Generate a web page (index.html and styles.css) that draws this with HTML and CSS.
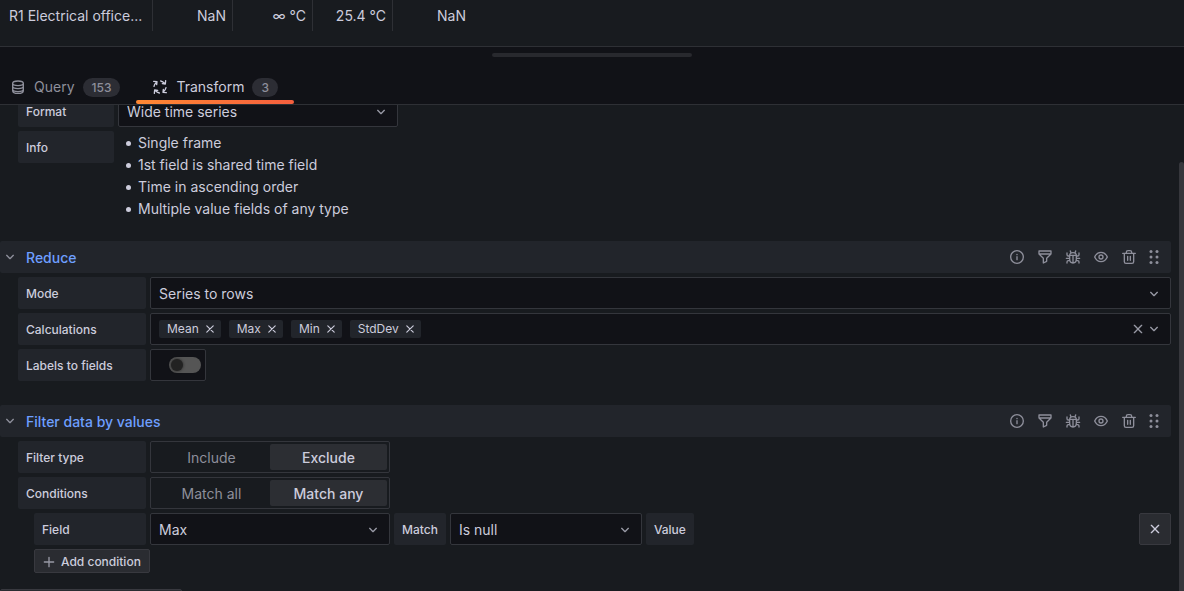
FILE: index.html
```html
<!DOCTYPE html>
<html lang="en">
<head>
    <meta charset="UTF-8">
    <meta name="viewport" content="width=device-width, initial-scale=1.0">
    <title>Edit panel</title>
    <link rel="stylesheet" href="styles.css">
</head>
<body>
    <!-- shared icons -->
    <svg class="sprite" aria-hidden="true">
        <symbol id="chevron" viewBox="0 0 24 24"><path d="M7 9.5l5 5 5-5"/></symbol>
        <symbol id="times" viewBox="0 0 24 24"><path d="M6.500 6.500l11 11M17.500 6.500l-11 11"/></symbol>
        <symbol id="plus" viewBox="0 0 24 24"><path d="M12 5v14M5 12h14"/></symbol>
        <symbol id="database" viewBox="0 0 24 24">
            <path d="M4 6.500C4 4 7.500 3 12 3s8 1 8 3.500S16.500 10 12 10 4 9 4 6.500zM4 6.500v11C4 20 7.500 21.500 12 21.500s8-1.500 8-4v-11M4 11c0 2.500 3.500 3.500 8 3.500s8-1 8-3.500M4 15.500C4 18 7.500 19 12 19s8-1 8-3.500"/>
        </symbol>
        <symbol id="process" viewBox="0 0 24 24">
            <path d="M2.500 3.500l5 .5-.5 4.500M7 4.500C5 6.500 3.500 8.500 3 11M20.500 2.500l-.5 5-4.500-.5M19.500 7C17.500 5 15.500 3.500 13 3M21.500 20.500l-5-.5.5-4.500M17 19.500c2-2 3.500-4 4-6.500M3.500 21.500l.5-5 4.500.5M4.500 17c2 2 4 3.500 6.500 4"/>
        </symbol>
        <symbol id="info" viewBox="0 0 24 24"><circle cx="12" cy="12" r="9.500"/><path d="M12 11.500v4.500M12 8v.5"/></symbol>
        <symbol id="filter" viewBox="0 0 24 24"><path d="M3 3h18v4.500l-6.500 6.500v4.500L9.500 21v-7L3 7.500zM3 7.500h18"/></symbol>
        <symbol id="bug" viewBox="0 0 24 24">
            <path d="M7 10c0-3 2-4.500 5-4.500s5 1.500 5 4.500v5c0 3.500-2 6-5 6s-5-2.500-5-6zM7 9.500h10M12 9.500V21M9 6L8 3M15 6l1-3M2 14h5M17 14h5M7 10.500H5c-1.500 0-2-1-2-2V6M17 10.500h2c1.500 0 2-1 2-2V6M7 17.500H5c-1.500 0-2 1-2 2V21M17 17.500h2c1.500 0 2 1 2 2V21"/>
        </symbol>
        <symbol id="eye" viewBox="0 0 24 24">
            <path d="M2.500 12C4.500 7.500 8 5 12 5s7.500 2.500 9.500 7c-2 4.500-5.500 7-9.500 7s-7.500-2.500-9.500-7z"/><circle cx="12" cy="12" r="3"/>
        </symbol>
        <symbol id="trash" viewBox="0 0 24 24">
            <path d="M2.500 6.500h19M5 6.500V19c0 1.500 1 2.500 2.500 2.500h9c1.500 0 2.500-1 2.500-2.500V6.500M8 6.500V5c0-1.500 1-2.500 2.500-2.500h3C15 2.500 16 3.500 16 5v1.500M10 11v6M14 11v6"/>
        </symbol>
        <symbol id="drag" viewBox="0 0 10 16">
            <g class="dots"><circle cx="2" cy="2.500" r="1.500"/><circle cx="8" cy="2.500" r="1.500"/><circle cx="2" cy="8" r="1.500"/><circle cx="8" cy="8" r="1.500"/><circle cx="2" cy="13.500" r="1.500"/><circle cx="8" cy="13.500" r="1.500"/></g>
        </symbol>
    </svg>

    <section class="preview">
        <table class="results">
            <tr>
                <td class="name">R1 Electrical office...</td>
                <td>NaN</td>
                <td>∞ °C</td>
                <td>25.4 °C</td>
                <td>NaN</td>
            </tr>
        </table>
    </section>

    <header class="tabs-bar">
        <div class="resizer"></div>
        <nav class="tabs">
            <a href="#query" class="tab"><svg class="icon"><use href="#database"/></svg>Query<span class="counter">153</span></a>
            <a href="#transform" class="tab active"><svg class="icon"><use href="#process"/></svg>Transform<span class="counter">3</span></a>
        </nav>
    </header>

    <main class="pane">
        <div class="content">
            <section class="body narrow">
                <div class="row">
                    <label class="label" for="format">Format</label>
                    <div class="select format">
                        <select id="format"><option>Wide time series</option></select>
                        <svg class="icon"><use href="#chevron"/></svg>
                    </div>
                </div>
                <div class="row">
                    <div class="label">Info</div>
                    <ul class="info">
                        <li>Single frame</li>
                        <li>1st field is shared time field</li>
                        <li>Time in ascending order</li>
                        <li>Multiple value fields of any type</li>
                    </ul>
                </div>
            </section>

            <section>
                <div class="head">
                    <button class="toggle" aria-label="Collapse Reduce"><svg class="icon"><use href="#chevron"/></svg></button>
                    <h2>Reduce</h2>
                    <div class="actions">
                        <button aria-label="Info"><svg class="icon"><use href="#info"/></svg></button>
                        <button aria-label="Filter"><svg class="icon"><use href="#filter"/></svg></button>
                        <button aria-label="Debug"><svg class="icon"><use href="#bug"/></svg></button>
                        <button aria-label="Disable"><svg class="icon"><use href="#eye"/></svg></button>
                        <button aria-label="Remove"><svg class="icon"><use href="#trash"/></svg></button>
                        <button aria-label="Move"><svg class="icon drag"><use href="#drag"/></svg></button>
                    </div>
                </div>
                <div class="body">
                    <div class="row">
                        <label class="label" for="mode">Mode</label>
                        <div class="select grow">
                            <select id="mode"><option>Series to rows</option></select>
                            <svg class="icon"><use href="#chevron"/></svg>
                        </div>
                    </div>
                    <div class="row">
                        <div class="label" id="calc">Calculations</div>
                        <div class="multi grow" role="group" aria-labelledby="calc">
                            <span class="tag">Mean<button aria-label="Remove Mean"><svg class="icon"><use href="#times"/></svg></button></span>
                            <span class="tag">Max<button aria-label="Remove Max"><svg class="icon"><use href="#times"/></svg></button></span>
                            <span class="tag">Min<button aria-label="Remove Min"><svg class="icon"><use href="#times"/></svg></button></span>
                            <span class="tag">StdDev<button aria-label="Remove StdDev"><svg class="icon"><use href="#times"/></svg></button></span>
                            <div class="controls">
                                <button aria-label="Clear"><svg class="icon"><use href="#times"/></svg></button>
                                <button aria-label="Open"><svg class="icon"><use href="#chevron"/></svg></button>
                            </div>
                        </div>
                    </div>
                    <div class="row">
                        <label class="label" for="labels">Labels to fields</label>
                        <div class="switch"><input type="checkbox" id="labels"></div>
                    </div>
                </div>
            </section>

            <section>
                <div class="head">
                    <button class="toggle" aria-label="Collapse Filter data by values"><svg class="icon"><use href="#chevron"/></svg></button>
                    <h2>Filter data by values</h2>
                    <div class="actions">
                        <button aria-label="Info"><svg class="icon"><use href="#info"/></svg></button>
                        <button aria-label="Filter"><svg class="icon"><use href="#filter"/></svg></button>
                        <button aria-label="Debug"><svg class="icon"><use href="#bug"/></svg></button>
                        <button aria-label="Disable"><svg class="icon"><use href="#eye"/></svg></button>
                        <button aria-label="Remove"><svg class="icon"><use href="#trash"/></svg></button>
                        <button aria-label="Move"><svg class="icon drag"><use href="#drag"/></svg></button>
                    </div>
                </div>
                <div class="body">
                    <div class="row">
                        <div class="label" id="type">Filter type</div>
                        <div class="radios" role="radiogroup" aria-labelledby="type">
                            <label><input type="radio" name="type">Include</label>
                            <label><input type="radio" name="type" checked>Exclude</label>
                        </div>
                    </div>
                    <div class="row">
                        <div class="label" id="cond">Conditions</div>
                        <div class="radios" role="radiogroup" aria-labelledby="cond">
                            <label><input type="radio" name="cond">Match all</label>
                            <label><input type="radio" name="cond" checked>Match any</label>
                        </div>
                    </div>
                    <div class="row nested">
                        <label class="label" for="field">Field</label>
                        <div class="select field">
                            <select id="field"><option>Max</option></select>
                            <svg class="icon"><use href="#chevron"/></svg>
                        </div>
                        <label class="label auto" for="match">Match</label>
                        <div class="select match">
                            <select id="match"><option>Is null</option></select>
                            <svg class="icon"><use href="#chevron"/></svg>
                        </div>
                        <div class="label auto">Value</div>
                        <button class="btn remove" aria-label="Remove condition"><svg class="icon"><use href="#times"/></svg></button>
                    </div>
                    <div class="row nested">
                        <button class="btn add"><svg class="icon"><use href="#plus"/></svg>Add condition</button>
                    </div>
                </div>
            </section>

            <button class="btn another" aria-label="Add another transformation"></button>
        </div>
        <div class="scrollbar"></div>
    </main>
</body>
</html>
```
FILE: styles.css
```css
* {
    box-sizing: border-box;
}
body {
    margin: 0;
    height: 100vh;
    display: flex;
    flex-direction: column;
    overflow: hidden;
    background: #181b1f;
    color: #ccccdc;
    font: 14px/22px Inter, sans-serif;
}
button, select {
    font: inherit;
    color: inherit;
}
button {
    display: flex;
    align-items: center;
    padding: 0;
    border: 0;
    background: none;
}
.sprite {
    display: none;
}
.icon {
    flex: none;
    width: 16px;
    height: 16px;
    fill: none;
    stroke: currentColor;
    stroke-width: 2;
    stroke-linecap: round;
    stroke-linejoin: round;
}
.dots {
    fill: currentColor;
    stroke: none;
}
.drag {
    width: 10px;
}

/* table preview */
.preview {
    flex: none;
    height: 47px;
    border-bottom: 1px solid #2e3035;
}
.results {
    border-collapse: separate;
    border-spacing: 0;
    table-layout: fixed;
    width: 473px;
}
.results td {
    width: 80px;
    height: 31px;
    padding: 0 6px;
    border-right: 1px solid #2e3035;
    text-align: right;
    white-space: nowrap;
}
.results .name {
    width: 153px;
    padding-left: 9px;
    text-align: left;
}
.results td:last-child {
    border-right-color: transparent;
}

/* tabs */
.tabs-bar {
    flex: none;
    padding-top: 6px;
    background: #111217;
    border-bottom: 1px solid #2e3035;
}
.resizer {
    width: 200px;
    height: 4px;
    margin: 0 auto 13px;
    border-radius: 4px;
    background: #28292e;
}
.tabs {
    display: flex;
}
.tab {
    position: relative;
    display: flex;
    align-items: center;
    gap: 8px;
    height: 34px;
    padding: 0 16px;
    color: #8e8f9b;
    text-decoration: none;
}
.tab:first-child {
    padding-left: 10px;
}
.tab.active {
    color: #ccccdc;
}
.tab.active::after {
    content: "";
    position: absolute;
    left: 0;
    right: 0;
    bottom: 0;
    height: 4px;
    border-radius: 2px;
    background: linear-gradient(90deg, #ff8833, #f55f3e);
}
.counter {
    padding: 0 9px;
    border-radius: 10px;
    background: #2c2d34;
    color: #8e8f9b;
    font-size: 12px;
    font-weight: 500;
    line-height: 19px;
}

/* transformations list, scrolled a little */
.pane {
    flex: 1;
    min-height: 0;
    display: flex;
    gap: 8px;
    overflow: hidden;
}
.content {
    flex: 1;
    min-width: 0;
    margin-top: -10px;
}
.scrollbar {
    width: 5px;
    margin-top: 57px;
    border-radius: 4px 4px 0 0;
    background: #36373c;
}
.body {
    display: flex;
    flex-direction: column;
    gap: 4px;
    padding: 4px 0 24px 18px;
}
.body.narrow {
    padding: 0 0 20px 18px;
}
.narrow .label {
    width: 96px;
}
.row {
    display: flex;
    align-items: flex-start;
    gap: 4px;
}
.nested {
    padding-left: 16px;
}
.label {
    flex: none;
    width: 128px;
    height: 32px;
    padding: 0 8px;
    border-radius: 2px;
    background: #22252b;
    font-size: 12px;
    font-weight: 500;
    line-height: 34px;
}
.nested .label {
    width: 112px;
}
.nested .auto {
    width: auto;
}
.info {
    margin: 0;
    padding: 1px 0 1px 8px;
    list-style: none;
}
.info li {
    display: flex;
    align-items: center;
    gap: 7px;
}
.info li::before {
    content: "";
    width: 5px;
    height: 5px;
    border-radius: 50%;
    background: #ccccdc;
}
.grow {
    flex: 1;
}
.select {
    position: relative;
}
.format {
    width: 280px;
}
.field {
    width: 240px;
}
.match {
    width: 192px;
}
.select select {
    display: block;
    appearance: none;
    width: 100%;
    height: 32px;
    padding: 2px 28px 0 8px;
    border: 1px solid #34363c;
    border-radius: 2px;
    background: #111217;
}
.select .icon {
    position: absolute;
    right: 9px;
    top: 9px;
    color: #9899a5;
    pointer-events: none;
}
.multi {
    display: flex;
    align-items: center;
    gap: 8px;
    height: 32px;
    padding: 0 8px;
    border: 1px solid #34363c;
    border-radius: 2px;
    background: #111217;
}
.tag {
    display: flex;
    align-items: center;
    gap: 4px;
    height: 18px;
    padding: 0 4px 0 8px;
    border-radius: 2px;
    background: #22252b;
    font-size: 12px;
}
.tag .icon {
    width: 14px;
    height: 14px;
}
.controls {
    display: flex;
    margin-left: auto;
    color: #9899a5;
}
.switch {
    display: flex;
    align-items: center;
    justify-content: flex-end;
    width: 56px;
    height: 32px;
    padding-right: 4px;
    border: 1px solid #34363c;
    border-radius: 2px;
    background: #111217;
}
.switch input {
    appearance: none;
    width: 32px;
    height: 16px;
    margin: 0;
    padding: 2px;
    border-radius: 8px;
    background: #555555;
}
.switch input::before {
    content: "";
    display: block;
    width: 12px;
    height: 12px;
    border-radius: 50%;
    background: #222222;
    box-shadow: 0 0 3px #222222;
}

/* section header */
.head {
    display: flex;
    align-items: center;
    height: 32px;
    padding: 0 12px 0 2px;
    border-radius: 2px;
    background: #22252b;
    color: #8e8f9b;
}
.head h2 {
    margin: 0 auto 0 8px;
    color: #6e9fff;
    font-size: 14px;
    font-weight: 500;
    line-height: 34px;
    height: 32px;
}
.actions {
    display: flex;
    gap: 12px;
}

.radios {
    display: flex;
    width: 240px;
    height: 32px;
    padding: 2px;
    border: 1px solid #34363c;
    border-radius: 2px;
}
.radios label {
    flex: 1;
    border-radius: 2px;
    color: #8e8f9b;
    line-height: 28px;
    height: 26px;
    text-align: center;
}
.radios input {
    position: absolute;
    appearance: none;
    margin: 0;
}
.radios label:has(:checked) {
    background: #2c2e33;
    color: #ccccdc;
    font-weight: 500;
}

.btn {
    justify-content: center;
    border: 1px solid #38393f;
    border-radius: 2px;
    background: #2a2c31;
}
.remove {
    width: 32px;
    height: 32px;
    margin-left: auto;
}
.add {
    gap: 4px;
    height: 24px;
    padding: 1px 8px 0 6px;
    font-size: 12px;
    font-weight: 500;
}
.add .icon {
    color: #9899a5;
}
.another {
    width: 182px;
    height: 32px;
    margin-top: -8px;
}
```
